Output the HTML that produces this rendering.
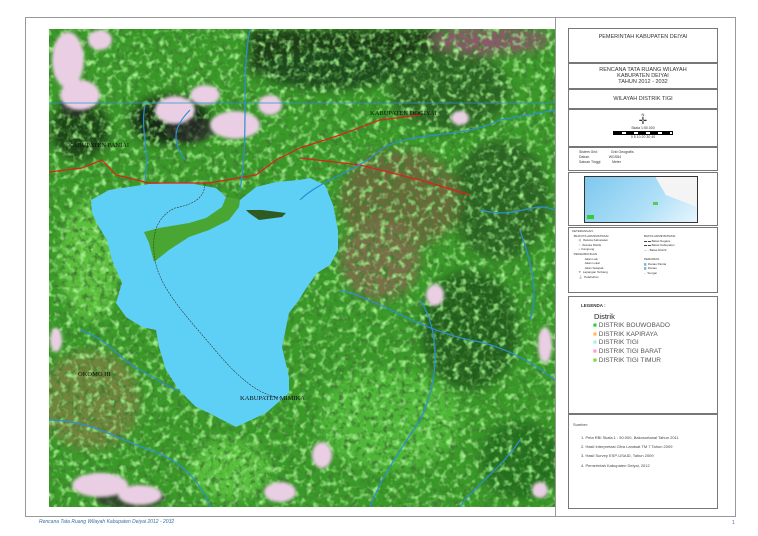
<!DOCTYPE html>
<html><head><meta charset="utf-8"><style>
body{margin:0;width:758px;height:536px;background:#fff;position:relative;overflow:hidden;font-family:"Liberation Sans",sans-serif}
.frame{position:absolute;left:25px;top:17px;width:709px;height:498px;border:1px solid #999;background:#fff}
.box{position:absolute;left:568px;width:148px;border:1px solid #777;background:#fff;font-size:5px;color:#333}
.c{text-align:center}
.foot{position:absolute;left:39px;top:519px;font-size:5px;font-style:italic;color:#3a6ea8}
</style></head><body>
<div class="frame"></div>
<svg style="position:absolute;left:49px;top:29px" width="506" height="478" viewBox="49 29 506 478">
<defs>
<filter id="b3"><feGaussianBlur stdDeviation="5"/></filter>
<filter id="b2"><feGaussianBlur stdDeviation="1.5"/></filter>
<filter id="tx" x="0" y="0" width="100%" height="100%"><feTurbulence type="fractalNoise" baseFrequency="0.18" numOctaves="3" seed="3"/><feColorMatrix values="0 0 0 0 0.05  0 0 0 0 0.2  0 0 0 0 0.03  -3 0 0 0 1.6"/></filter>
<filter id="tx2" x="0" y="0" width="100%" height="100%"><feTurbulence type="fractalNoise" baseFrequency="0.15" numOctaves="2" seed="9"/><feColorMatrix values="0 0 0 0 0.35  0 0 0 0 0.85  0 0 0 0 0.25  3 0 0 0 -1.5"/></filter>
</defs>
<rect x="49" y="29" width="506" height="478" fill="#3a9a28"/>
<g filter="url(#b3)">
<rect x="250" y="29" width="230" height="45" fill="#1a3a16"/>
<ellipse cx="330" cy="70" rx="70" ry="20" fill="#1e4a1a"/>
<ellipse cx="450" cy="90" rx="60" ry="40" fill="#2a6420"/>
<ellipse cx="500" cy="200" rx="50" ry="60" fill="#2a6420"/>
<ellipse cx="400" cy="200" rx="60" ry="50" fill="#6a6a3a"/>
<ellipse cx="380" cy="260" rx="40" ry="40" fill="#7a7048"/>
<ellipse cx="470" cy="330" rx="50" ry="60" fill="#245e1c"/>
<ellipse cx="390" cy="420" rx="70" ry="50" fill="#50b838"/>
<ellipse cx="90" cy="400" rx="50" ry="50" fill="#72843e"/>
<ellipse cx="490" cy="40" rx="60" ry="14" fill="#8a5a6a"/>
<ellipse cx="90" cy="260" rx="30" ry="60" fill="#5cc03e"/>
<ellipse cx="170" cy="120" rx="40" ry="25" fill="#142a12"/>
<ellipse cx="520" cy="460" rx="40" ry="40" fill="#24701c"/>
<ellipse cx="80" cy="130" rx="30" ry="30" fill="#1e4418"/>
<ellipse cx="230" cy="470" rx="40" ry="30" fill="#58c03e"/>
</g>
<rect x="49" y="29" width="506" height="478" filter="url(#tx)"/>
<rect x="49" y="29" width="506" height="478" filter="url(#tx2)"/>
<g fill="#2a2a2a" filter="url(#b2)" opacity="0.7">
<ellipse cx="190" cy="130" rx="25" ry="12"/><ellipse cx="130" cy="498" rx="35" ry="10"/><ellipse cx="75" cy="105" rx="15" ry="12"/>
</g>
<g fill="#eacfe4" filter="url(#b2)">
<ellipse cx="68" cy="60" rx="16" ry="28"/><ellipse cx="80" cy="95" rx="20" ry="15"/><ellipse cx="100" cy="40" rx="12" ry="10"/>
<ellipse cx="175" cy="110" rx="20" ry="14"/><ellipse cx="205" cy="95" rx="15" ry="10"/><ellipse cx="235" cy="125" rx="25" ry="14"/><ellipse cx="270" cy="105" rx="12" ry="10"/>
<ellipse cx="460" cy="118" rx="9" ry="7"/><ellipse cx="435" cy="295" rx="9" ry="11"/>
<ellipse cx="545" cy="345" rx="7" ry="18"/><ellipse cx="322" cy="455" rx="10" ry="13"/>
<ellipse cx="100" cy="485" rx="28" ry="12"/><ellipse cx="140" cy="495" rx="22" ry="10"/><ellipse cx="280" cy="492" rx="16" ry="10"/>
<ellipse cx="56" cy="340" rx="6" ry="12"/><ellipse cx="540" cy="490" rx="8" ry="8"/>
</g>
<polygon fill="#5fd0f5" points="91,200 109,190 149,184 189,183 216,188 226,197 240,200 256,187 276,182 299,180 310,178 325,185 333,205 338,230 338,250 330,265 317,273 305,290 299,300 289,313 282,347 289,377 289,393 266,413 236,427 209,413 196,407 179,390 166,370 159,347 156,330 142,327 126,317 116,303 122,283 112,260 107,240 99,227 92,213"/>
<polygon fill="#4aa632" points="226,197 240,200 239,207 229,220 209,230 189,237 169,250 154,262 149,243 144,232 159,228 189,223 206,218 222,207"/>
<polygon fill="#2f5a22" points="246,210 262,210 286,213 282,217 259,220 249,213"/>
<path d="M205,183 C205,200 190,205 175,208 C160,215 150,230 155,260 C160,290 190,320 215,350 C240,380 260,395 280,398" fill="none" stroke="#333" stroke-width="0.6" stroke-dasharray="2,1"/>
<path d="M49,172 L82,168 L102,160 L116,175 L149,183 L209,183 L256,175 L276,160 L300,148 L340,135 L380,120 L420,115 M300,158 L360,165 L420,180 L470,195" fill="none" stroke="#e0201a" stroke-width="1.2"/>
<g fill="none" stroke="#2a90d0" stroke-width="1.2">
<path d="M49,103 L555,103" stroke-width="0.8"/>
<path d="M145,105 C140,130 150,150 145,180"/><path d="M190,110 C175,125 170,140 185,160"/>
<path d="M250,29 C240,80 250,130 240,190"/>
<path d="M300,200 C320,180 360,170 380,150 C410,130 460,140 500,120 L555,110"/>
<path d="M340,290 C380,300 420,330 470,340 C500,345 530,360 555,380"/>
<path d="M420,300 C440,330 440,380 420,420 C400,450 380,480 370,507"/>
<path d="M480,210 C520,220 530,200 555,210"/>
<path d="M520,440 C500,470 470,490 460,507"/>
<path d="M80,330 C110,340 120,360 140,370 C160,380 170,390 180,390"/>
<path d="M49,420 C90,420 120,440 150,450 C180,460 200,480 210,507"/>
<path d="M520,230 C530,260 540,290 530,320"/>
</g>
<g font-family="Liberation Serif,serif" font-size="6.5" fill="#111">
<text x="370" y="115">KABUPATEN DOGIYAI</text>
<text x="68" y="147">KABUPATEN PANIAI</text>
<text x="78" y="376">OKOMO III</text>
<text x="240" y="400">KABUPATEN MIMIKA</text>
</g>
</svg>
<div style="position:absolute;left:555px;top:17px;width:1px;height:500px;background:#999"></div>
<div class="box c" style="top:28px;height:33px"><div style="margin-top:5px;font-size:5.5px">PEMERINTAH KABUPATEN DEIYAI</div></div>
<div class="box c" style="top:63px;height:24px;font-size:5.5px;line-height:6px"><div style="margin-top:3px">RENCANA TATA RUANG WILAYAH<br>KABUPATEN DEIYAI<br>TAHUN 2012 - 2032</div></div>
<div class="box c" style="top:89px;height:18px"><div style="margin-top:6px;font-size:5.5px">WILAYAH DISTRIK TIGI</div></div>
<div class="box c" style="top:109px;height:36px"><div style="font-size:4px;margin-top:2px">N</div><div style="font-size:10px;line-height:9px">✛</div><div style="font-size:3.5px">Skala 1:50.000</div><div style="margin:1px auto 0;width:58px;height:2px;background:repeating-linear-gradient(90deg,#000 0 8px,#fff 8px 12px);border:1px solid #000"></div><div style="font-size:3.5px">0 5 10 20 30 40</div></div>
<div class="box" style="top:147px;height:22px;font-size:3.5px;line-height:5px;padding-left:10px;width:138px"><div style="margin-top:2px">Sistem Grid &nbsp;&nbsp;&nbsp;&nbsp;&nbsp;&nbsp;&nbsp;&nbsp;&nbsp;&nbsp;&nbsp;&nbsp; Grid Geografis<br>Datum &nbsp;&nbsp;&nbsp;&nbsp;&nbsp;&nbsp;&nbsp;&nbsp;&nbsp;&nbsp;&nbsp;&nbsp;&nbsp;&nbsp;&nbsp;&nbsp;&nbsp;&nbsp; WGS84<br>Satuan Tinggi &nbsp;&nbsp;&nbsp;&nbsp;&nbsp;&nbsp;&nbsp;&nbsp;&nbsp;&nbsp; Meter</div></div>
<div class="box" style="top:172px;height:52px"><div style="position:absolute;left:15px;top:3px;width:112px;height:45px;background:linear-gradient(135deg,#7ec8ee,#b0e0f8 60%,#e8f6fd);border:1px solid #333"><div style="position:absolute;left:60px;top:0;width:52px;height:30px;background:#f4f4f4;clip-path:polygon(20% 0,100% 0,100% 100%,40% 60%)"></div><div style="position:absolute;left:68px;top:25px;width:5px;height:3px;background:#5c5"></div><div style="position:absolute;left:2px;top:38px;width:7px;height:4px;background:#3c3"></div></div></div>
<div class="box" style="top:227px;height:64px;font-size:3px;line-height:4.6px;padding-left:3px;width:145px">
<div style="position:absolute;left:3px;top:1px">KETERANGAN:<br>&nbsp;&nbsp;IBUKOTA ADMINISTRASI<br>&nbsp;&nbsp;&nbsp;&nbsp;&nbsp;&nbsp;&nbsp;&nbsp;◎ &nbsp;Ibukota Kabupaten<br>&nbsp;&nbsp;&nbsp;&nbsp;&nbsp;&nbsp;&nbsp;&nbsp;○ &nbsp;Ibukota Distrik<br>&nbsp;&nbsp;&nbsp;&nbsp;&nbsp;&nbsp;&nbsp;&nbsp;• &nbsp;Kampung<br>&nbsp;&nbsp;PERHUBUNGAN<br>&nbsp;&nbsp;&nbsp;&nbsp;&nbsp;&nbsp;&nbsp;&nbsp;&nbsp;&nbsp;&nbsp;&nbsp;&nbsp;&nbsp;&nbsp;Jalan Lain<br>&nbsp;&nbsp;&nbsp;&nbsp;&nbsp;&nbsp;&nbsp;&nbsp;&nbsp;&nbsp;&nbsp;&nbsp;&nbsp;&nbsp;&nbsp;Jalan Lokal<br>&nbsp;&nbsp;&nbsp;&nbsp;&nbsp;&nbsp;&nbsp;&nbsp;&nbsp;&nbsp;&nbsp;&nbsp;&nbsp;&nbsp;&nbsp;Jalan Setapak<br>&nbsp;&nbsp;&nbsp;&nbsp;&nbsp;&nbsp;&nbsp;&nbsp;✈ &nbsp;Lapangan Terbang<br>&nbsp;&nbsp;&nbsp;&nbsp;&nbsp;&nbsp;&nbsp;&nbsp;⚓ &nbsp;Pelabuhan</div>
<div style="position:absolute;left:75px;top:6px">BATAS ADMINISTRASI<br>▬ ▬ Batas Negara<br>▬ ▬ Batas Kabupaten<br>— · Batas Distrik<br><br>PERAIRAN<br><span style="color:#7bc">▆</span> &nbsp;Danau Pantai<br><span style="color:#7bc">▆</span> &nbsp;Danau<br><span style="color:#29c">~</span> &nbsp;Sungai</div></div>
<div class="box" style="top:296px;height:116px">
<div style="position:absolute;left:12px;top:6px;font-size:4.5px;font-weight:bold">LEGENDA :</div>
<div style="position:absolute;left:25px;top:15px;font-size:7.5px;color:#222">Distrik</div>
<div style="position:absolute;left:24px;top:25px;font-size:6.5px;line-height:8.7px;color:#555">
<span style="color:#3c3">■</span> DISTRIK BOUWOBADO<br><span style="color:#fb5">■</span> DISTRIK KAPIRAYA<br><span style="color:#aee">■</span> DISTRIK TIGI<br><span style="color:#f9d">■</span> DISTRIK TIGI BARAT<br><span style="color:#7d3">■</span> DISTRIK TIGI TIMUR</div></div>
<div class="box" style="top:414px;height:93px;font-size:4px;color:#444">
<div style="position:absolute;left:4px;top:7px">Sumber:</div>
<div style="position:absolute;left:12px;top:18px;line-height:9.2px">1. Peta RBI Skala 1 : 50.000, Bakosurtanal Tahun 2011<br>2. Hasil Interpretasi Citra Landsat TM 7 Tahun 2009<br>3. Hasil Survey ESP-USAID, Tahun 2009<br>4. Pemerintah Kabupaten Deiyai, 2012</div></div>
<div class="foot">Rencana Tata Ruang Wilayah Kabupaten Deiyai 2012 - 2032</div>
<div style="position:absolute;left:732px;top:520px;font-size:5px;color:#3a6ea8">1</div>
</body></html>
